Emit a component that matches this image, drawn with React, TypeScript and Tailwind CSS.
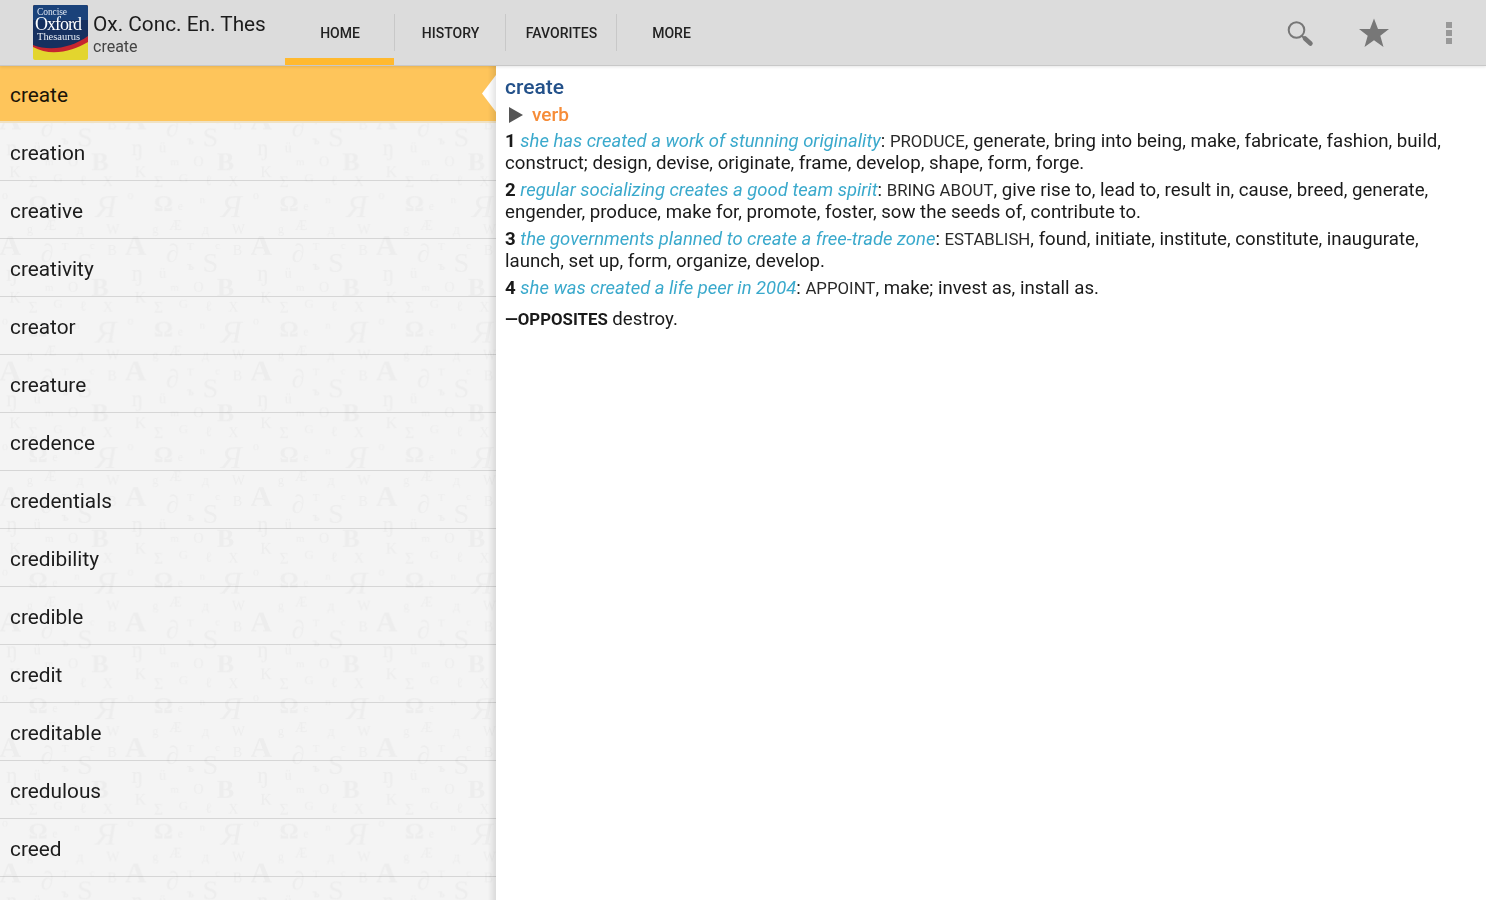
import React from "react";

const words = ["creation","creative","creativity","creator","creature","credence","credentials","credibility","credible","credit","creditable","credulous","creed",""];

const glyphs: [string, number, number, number, boolean?, boolean?][] = [
  ["A",10,10,30,true],["∂",47,17,26],["T",65,5,11],["c",92,4,11],["B",112,10,14],
  ["S",85,27,28],["ъ",65,25,12,true],["ŋ",12,36,24],["ü",37,33,14],["B",100,51,26,true],
  ["m",49,46,11],["O",73,47,14],["K",15,58,16],["Σ",33,68,16],["G",58,63,13],["ℓ",83,66,14],["X",108,67,14],
  ["Ω",38,92,24,true],["Я",106,98,32,false,true],["o",5,80,12],["n",77,84,11],["e",55,91,12],
  ["Æ",50,111,14],["д",80,115,14],["W",113,115,14],["g",30,114,12],
];
const offsets = [-125.5, 0, 125.5];

function Pattern() {
  return (
    <svg className="pointer-events-none absolute inset-0 z-[5] h-full w-full mix-blend-multiply" aria-hidden="true">
      <defs>
        <pattern id="letters" x="0" y="53.5" width="125.5" height="125.5" patternUnits="userSpaceOnUse">
          {offsets.map((dy) =>
            glyphs.map(([c, x, y, s, b, i], n) => (
              <text key={`${dy}-${n}`} x={x} y={y + dy} fontSize={s} textAnchor="middle" fontFamily="'Liberation Serif', serif" fontWeight={b ? 700 : 400} fontStyle={i ? "italic" : "normal"} fill="#f8f8f8">{c}</text>
            ))
          )}
        </pattern>
      </defs>
      <rect width="100%" height="100%" fill="url(#letters)" />
    </svg>
  );
}

function Logo() {
  return (
    <svg width="55" height="55" viewBox="0 0 55 55" className="shrink-0 rounded-[2px]">
      <rect width="55" height="55" fill="#e3d52e" />
      <path d="M0 0H55V37C40 46 18 52 0 42Z" fill="#c6252f" />
      <path d="M0 0H55V31C40 42 18 47 0 40Z" fill="#16305f" />
      <path d="M0 0H55V15H0Z" fill="#1c4a86" opacity="0.7" />
      <text x="4" y="10" fontSize="9.5" fontFamily="'Liberation Serif', serif" fill="#dfe7f2" textLength="30">Concise</text>
      <text x="2" y="25" fontSize="18" fontFamily="'Liberation Serif', serif" fill="#ffffff" textLength="47">Oxford</text>
      <text x="4" y="35" fontSize="10.5" fontFamily="'Liberation Serif', serif" fill="#e8edf5" textLength="43">Thesaurus</text>
    </svg>
  );
}

function Tab({ label, active, w, divider = true }: { label: string; active?: boolean; w: string; divider?: boolean }) {
  return (
    <div className={`relative flex h-full items-center justify-center pt-[2px] ${w}`}>
      <span className="text-[14px] font-medium text-[#222222]">{label}</span>
      {active && <div className="absolute bottom-0 left-0 right-[1px] h-[7px] bg-[#ffb92f]" />}
      {divider && <div className="absolute right-0 top-[14px] h-[37px] w-px bg-[#c8c8c8]" />}
    </div>
  );
}

const Caps = ({ children }: { children: React.ReactNode }) => <span className="text-[16.8px] text-[#2a2a2a]">{children}</span>;
const Eg = ({ children }: { children: React.ReactNode }) => <i className="text-[18.45px] text-[#3aa9cc]">{children}</i>;

export default function App() {
  return (
    <div className="flex h-[900px] w-[1486px] flex-col overflow-hidden bg-white font-['Roboto',sans-serif] text-[#1a1a1a]">
      <header className="relative z-30 flex h-[66px] shrink-0 items-stretch border-b border-[#c8c8c8] bg-[#dcdcdc] shadow-[0_1px_3px_rgba(0,0,0,0.1)]">
        <div className="flex w-[285px] shrink-0 items-center pl-[33px]">
          <Logo />
          <div className="ml-[5px] mt-[3px] flex flex-col">
            <span className="text-[20.8px] leading-[26px] text-[#1c1c1c]">Ox. Conc. En. Thes</span>
            <span className="text-[16px] leading-[20px] text-[#444444]">create</span>
          </div>
        </div>
        <Tab label="HOME" active w="w-[110px]" />
        <Tab label="HISTORY" w="w-[111px]" />
        <Tab label="FAVORITES" w="w-[111px]" />
        <Tab label="MORE" w="w-[109px]" divider={false} />
        <div className="ml-auto flex h-full items-center pr-[34px]">
          <svg width="30" height="30" viewBox="0 0 30 30" fill="none" className="mr-[43px]">
            <circle cx="11.5" cy="12" r="7.8" stroke="#777777" strokeWidth="2" />
            <path d="M17 18L19.5 20.5" stroke="#777777" strokeWidth="2" />
            <path d="M20 20.5L25.5 25.5" stroke="#777777" strokeWidth="4.5" strokeLinecap="round" />
          </svg>
          <svg width="32" height="32" viewBox="0 0 32 32" className="mr-[56px]">
            <path d="M16 1.5L20 12H31L22.3 18.7L25.5 30L16 23.2L6.5 30L9.7 18.7L1 12H12Z" fill="#777777" />
          </svg>
          <div className="flex flex-col gap-[2px]">
            <div className="h-[6px] w-[6px] bg-[#999999]" />
            <div className="h-[6px] w-[6px] bg-[#999999]" />
            <div className="h-[6px] w-[6px] bg-[#999999]" />
          </div>
        </div>
      </header>

      <div className="flex min-h-0 flex-1">
        <aside className="relative w-[496px] shrink-0 overflow-hidden bg-[#f4f4f4]">
          <div className="absolute inset-y-0 right-0 z-10 w-[8px] bg-gradient-to-r from-transparent to-black/10" />
          <div className="flex flex-col">
            <div className="relative z-[6] flex h-[57px] items-center border-b-2 border-[#f0e2c4] bg-[#fec55b] pl-[10px] pt-[4px] text-[20.8px] text-[#1a1408]">
              create
              <div className="absolute right-0 top-[9px] z-20 h-[37px] w-[14px] bg-white [clip-path:polygon(100%_0,0_50%,100%_100%)]" />
            </div>
            {words.map((w) => (
              <div key={w} className="flex h-[58px] items-center border-b border-[#d6d6d6] pl-[10px] pt-[4px] text-[20.8px] text-[#1c1c1c]">
                {w}
              </div>
            ))}
          </div>
          <Pattern />
        </aside>

        <main className="min-w-0 flex-1 pl-[9px] pr-[30px] pt-[8px] text-[18.65px] leading-[22px]">
          <h1 className="text-[21px] font-medium leading-[26px] text-[#23518a]">create</h1>
          <div className="mt-[2px] flex h-[26px] items-center">
            <svg width="16" height="18" viewBox="0 0 16 18" className="ml-[3px] mr-[8px]">
              <path d="M1 1L15 9L1 17Z" fill="#555555" />
            </svg>
            <span className="text-[19px] font-medium text-[#f68c38]">verb</span>
          </div>
          <p className="mt-[2px]"><b className="font-bold">1</b> <Eg>she has created a work of stunning originality</Eg>: <Caps>PRODUCE</Caps>, generate, bring into being, make, fabricate, fashion, build, construct; design, devise, originate, frame, develop, shape, form, forge.</p>
          <p className="mt-[5px]"><b className="font-bold">2</b> <Eg>regular socializing creates a good team spirit</Eg>: <Caps>BRING ABOUT</Caps>, give rise to, lead to, result in, cause, breed, generate, engender, produce, make for, promote, foster, sow the seeds of, contribute to.</p>
          <p className="mt-[5px]"><b className="font-bold">3</b> <Eg>the governments planned to create a free-trade zone</Eg>: <Caps>ESTABLISH</Caps>, found, initiate, institute, constitute, inaugurate, launch, set up, form, organize, develop.</p>
          <p className="mt-[5px]"><b className="font-bold">4</b> <Eg>she was created a life peer in 2004</Eg>: <Caps>APPOINT</Caps>, make; invest as, install as.</p>
          <p className="mt-[9px]"><span className="text-[16.8px] font-bold">—OPPOSITES</span> destroy.</p>
        </main>
      </div>
    </div>
  );
}
